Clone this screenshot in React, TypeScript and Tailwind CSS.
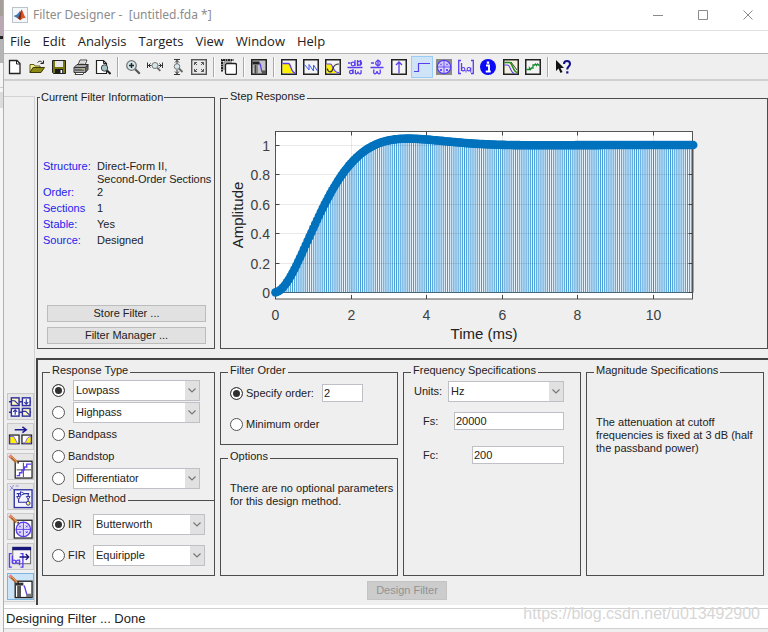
import type { ReactNode } from "react";

const INK = "#222222";
const VIOLET = "#5a3df0";

function Icon({ children, size = "h-4 w-4" }: { children: ReactNode; size?: string }) {
  return (
    <svg viewBox="0 0 16 16" className={`${size} shrink-0`} fill="none" aria-hidden="true">
      {children}
    </svg>
  );
}

function Boxed({ children, bg = "#f4f4f4" }: { children?: ReactNode; bg?: string }) {
  return (
    <Icon>
      <rect x="0.75" y="0.75" width="14.5" height="14.5" fill={bg} stroke={INK} strokeWidth="1.5" />
      {children}
    </Icon>
  );
}

const NewIcon = () => (
  <Icon>
    <path d="M2.5 1.5h7.500l3 3v10h-10.500z" fill="#fff" stroke={INK} strokeWidth="1.3" />
    <path d="M9.500 1.500v3.500h3.500" stroke={INK} />
  </Icon>
);

const OpenIcon = () => (
  <Icon>
    <path d="M1 13.5V5.5h4l1 1.5h5v2" fill="#f5ef8f" stroke="#5c5a10" />
    <path d="M1 13.5l3-5h11.5l-3.5 5z" fill="#8c8a12" stroke="#3c3a08" />
    <path d="M8.5 3.5c2-2 4-1.500 5 .5M14.500 1.500v3h-3" stroke={INK} />
  </Icon>
);

const SaveIcon = () => (
  <Icon>
    <path d="M1.500 1.500h13v13h-12l-1-1z" fill="#77750f" stroke={INK} />
    <rect x="4" y="2" width="8" height="6" fill="#e8e8e8" />
    <rect x="4" y="10" width="8" height="4.500" fill="#1a1a1a" />
    <rect x="9.500" y="11" width="1.700" height="3" fill="#fff" />
  </Icon>
);

const PrintIcon = () => (
  <Icon>
    <path d="M5 6l2-5h7l-2 5" fill="#fff" stroke="#444" />
    <path d="M7 3h5M6.500 4.500h5" stroke="#999" strokeWidth="0.700" />
    <path d="M1 8.500l3-3h11l-2.500 3v5H1z" fill="#a8a8a8" stroke="#333" />
    <path d="M12.500 8.500l2.500-3v5l-2.500 3" fill="#666" stroke="#333" />
    <path d="M1 8.500h11.500M2 11h9" stroke="#333" />
    <path d="M3 13.500h8l-1 2H2z" fill="#fff" stroke="#444" />
    <rect x="9" y="9.500" width="2" height="1" fill="#d7c634" />
  </Icon>
);

const PreviewIcon = () => (
  <Icon>
    <path d="M1.500 1.500h7l3 3v10h-10z" fill="#fff" stroke={INK} strokeWidth="1.200" />
    <path d="M8.500 1.500v3h3" stroke={INK} />
    <circle cx="9.500" cy="9" r="3.200" fill="#a9c4c9" stroke="#444" />
    <path d="M12 11.500l3.500 3.500" stroke={INK} strokeWidth="2" />
  </Icon>
);

const ZoomInIcon = () => (
  <Icon>
    <circle cx="6.500" cy="6.500" r="4.800" fill="#d3e6ec" stroke="#777" strokeWidth="1.300" />
    <path d="M4 6.500h5M6.500 4v5" stroke={INK} strokeWidth="1.400" />
    <path d="M10.200 10.200l4.500 4.500" stroke="#555" strokeWidth="2.200" />
  </Icon>
);

const ZoomXIcon = () => (
  <Icon>
    <circle cx="8" cy="6.500" r="3" fill="#d3e6ec" stroke="#777" />
    <path d="M10.300 8.800l3 3" stroke="#666" strokeWidth="1.800" />
    <path d="M.5 3.500v5.500M15.500 3.500v5.500M1 6.500h3.500M11.500 6.500h4M1.500 6.500l2-2M1.500 6.500l2 2M14.500 6.500l-2-2M14.500 6.500l-2 2" stroke="#333" />
  </Icon>
);

const ZoomYIcon = () => (
  <Icon>
    <circle cx="8" cy="7.500" r="2.800" fill="#d3e6ec" stroke="#777" />
    <path d="M10 9.500l3.500 3.500" stroke="#666" strokeWidth="1.800" />
    <path d="M5 .5h6M5 15.500h6M8 .5V4.500M8 11v4.500M8 1.500L6 3.500M8 1.500l2 2M8 14.500l-2-2M8 14.500l2-2" stroke="#333" />
  </Icon>
);

const FullViewIcon = () => (
  <Icon>
    <rect x="0.700" y="0.700" width="14.600" height="14.600" fill="#e9e9e9" stroke="#555" strokeWidth="1.400" />
    <path d="M3.500 6V3.500H6M10 3.500h2.500V6M12.500 10v2.500H10M6 12.500H3.500V10M3.500 3.500L6 6M12.500 3.500L10 6M12.500 12.500L10 10M3.500 12.500L6 10" stroke="#555" />
  </Icon>
);

const UndockIcon = () => (
  <Icon>
    <path d="M1 12.500V1h11.500" stroke={INK} strokeWidth="2" strokeDasharray="2 0.500" />
    <path d="M3 11V3h8" stroke="#666" />
    <rect x="4.500" y="4.500" width="11" height="11" rx="1.500" fill="#fff" stroke={INK} strokeWidth="1.300" />
  </Icon>
);

const SpecsIcon = () => (
  <Boxed bg="#c4c4c4">
    <rect x="1.500" y="2.500" width="7" height="3" fill={INK} />
    <path d="M4.500 6v8.500" stroke="#444" strokeWidth="2" />
    <path d="M1.500 8h2.500M6.500 6v8.500" stroke="#8a8a8a" />
    <path d="M8.500 4c2 2.500 1 7 3 9.500h3" stroke={VIOLET} strokeWidth="1.300" />
    <rect x="11" y="11.500" width="4" height="3.500" fill="#555" />
  </Boxed>
);

const MagnitudeIcon = () => (
  <Boxed>
    <path d="M1.500 4.500h6c2.500 0 2 8.500 6.500 9.500H1.500z" fill="#fff200" />
    <path d="M1.500 4.500h6c2.500 0 2 8.500 6.500 9.500" stroke={VIOLET} strokeWidth="1.300" />
  </Boxed>
);

const PhaseIcon = () => (
  <Boxed>
    <path d="M1.500 5.500L6 11V5.500L10.500 12V6l4 6" stroke="#3f5df0" />
  </Boxed>
);

const MagPhaseIcon = () => (
  <Boxed>
    <path d="M1.500 5h4c2.500 0 3 9 7 9H1.500z" fill="#fff200" />
    <path d="M1.500 5h4c2.500 0 2 9 8.500 8.500" stroke={VIOLET} strokeWidth="1.200" />
    <path d="M2 9.500c2 5 5 4 6 0 1-4 3-4.500 6-4.500" stroke="#333" strokeWidth="1.100" />
  </Boxed>
);

const GroupDelayIcon = () => (
  <Icon>
    <path d="M1 4h2.500M8 1v6M10.500 1v6M13.500 1v5.500M.500 8.500h15M6 10v5" stroke={VIOLET} strokeWidth="1.300" />
    <circle cx="6" cy="5" r="1.800" stroke={VIOLET} strokeWidth="1.200" />
    <circle cx="12.500" cy="4.200" r="2" stroke={VIOLET} strokeWidth="1.200" />
    <circle cx="4.200" cy="13" r="1.700" stroke={VIOLET} strokeWidth="1.200" />
    <path d="M8.500 11c-1 5 2 5 2.500 1.500.500 3.500 4 3.500 3-1.500" stroke={VIOLET} strokeWidth="1.200" />
  </Icon>
);

const PhaseDelayIcon = () => (
  <Icon>
    <path d="M2 4h3M9 .500v7M1.500 8.500h13" stroke={VIOLET} strokeWidth="1.300" />
    <circle cx="9" cy="4" r="2.300" stroke={VIOLET} strokeWidth="1.200" />
    <path d="M5 10.500c-1.500 5.500 2.500 5.500 3 1.500.500 4 4.500 4 3-1.500" stroke={VIOLET} strokeWidth="1.300" />
  </Icon>
);

const ImpulseIcon = () => (
  <Boxed>
    <path d="M8 14V3M5 6l3-3 3 3" stroke={VIOLET} strokeWidth="1.300" />
  </Boxed>
);

const StepIcon = () => (
  <Icon>
    <path d="M0 12.500h4.500V4.500H16" stroke={VIOLET} strokeWidth="1.200" />
  </Icon>
);

const PoleZeroIcon = () => (
  <Icon>
    <rect width="16" height="16" fill="#8a8a8a" />
    <circle cx="8" cy="8" r="6.700" fill="#dcd8ff" stroke={VIOLET} strokeWidth="1.200" />
    <path d="M8 1v14M1 8h14M4 4.500l2 2M6 4.500l-2 2M10 4.500l2 2M12 4.500l-2 2M4 10l2 2M6 10l-2 2M10 10l2 2M12 10l-2 2" stroke={VIOLET} strokeWidth="0.900" />
  </Icon>
);

const CoeffIcon = () => (
  <Icon>
    <path d="M3 1.500H.700v13H3M13 1.500h2.300v13H13M3.500 4v8" stroke={VIOLET} strokeWidth="1.300" />
    <circle cx="5.200" cy="10.200" r="1.700" stroke={VIOLET} strokeWidth="1.100" />
    <circle cx="10.800" cy="10.200" r="1.700" stroke={VIOLET} strokeWidth="1.100" />
    <path d="M8 11v2.500M12.800 8.500v5" stroke={VIOLET} />
  </Icon>
);

const InfoIcon = () => (
  <Icon>
    <circle cx="8" cy="8" r="8" fill="#0a0af5" />
    <path d="M6 6.500h3v6M5.700 12.500h5" stroke="#fff" strokeWidth="1.900" />
    <rect x="6.800" y="2.500" width="2.400" height="2.300" fill="#fff" />
  </Icon>
);

const MaskIcon = () => (
  <Boxed bg="#f3f0dc">
    <path d="M1.500 3.500h5c3 0 3.500 10 8 10" stroke="#1b8a1b" strokeWidth="1.500" />
    <path d="M1.500 6h3c3 0 3 8.500 7 8.500" stroke={VIOLET} strokeWidth="1.100" />
    <path d="M8 3l6 8" stroke="#444" />
  </Boxed>
);

const NoiseIcon = () => (
  <Boxed>
    <path d="M1.500 10.500h3V9l1 1.500L6.500 9H8V6h1.500l1-1 1 1.500 1-1.500 1 1h1" stroke="#138a2a" strokeWidth="1.300" />
  </Boxed>
);

const WhatsThisIcon = () => (
  <Icon>
    <path d="M1 1v11l2.500-2.500L5.500 14l2-1-2-4H9z" fill="#111" />
    <path d="M9 5c0-4 6-4 6 0 0 2.500-2.800 2.500-2.800 5.500" stroke="#10108c" strokeWidth="2" />
    <rect x="11.200" y="12.300" width="2.200" height="2.200" fill="#10108c" />
  </Icon>
);

type Tool = { name: string; icon: ReactNode; active?: boolean };

const toolGroups: Tool[][][] = [
  [[
    { name: "New", icon: <NewIcon /> },
    { name: "Open", icon: <OpenIcon /> },
    { name: "Save", icon: <SaveIcon /> },
    { name: "Print", icon: <PrintIcon /> },
    { name: "Print preview", icon: <PreviewIcon /> },
  ]],
  [[
    { name: "Zoom in", icon: <ZoomInIcon /> },
    { name: "Zoom X", icon: <ZoomXIcon /> },
    { name: "Zoom Y", icon: <ZoomYIcon /> },
    { name: "Full view", icon: <FullViewIcon /> },
  ]],
  [[{ name: "Undock", icon: <UndockIcon /> }]],
  [[{ name: "Filter specifications", icon: <SpecsIcon /> }]],
  [
    [
      { name: "Magnitude response", icon: <MagnitudeIcon /> },
      { name: "Phase response", icon: <PhaseIcon /> },
      { name: "Magnitude and phase", icon: <MagPhaseIcon /> },
      { name: "Group delay", icon: <GroupDelayIcon /> },
      { name: "Phase delay", icon: <PhaseDelayIcon /> },
      { name: "Impulse response", icon: <ImpulseIcon /> },
    ],
    [
      { name: "Step response", icon: <StepIcon />, active: true },
      { name: "Pole-zero plot", icon: <PoleZeroIcon /> },
      { name: "Coefficients", icon: <CoeffIcon /> },
      { name: "Information", icon: <InfoIcon /> },
    ],
    [
      { name: "Magnitude estimate", icon: <MaskIcon /> },
      { name: "Noise spectrum", icon: <NoiseIcon /> },
    ],
  ],
  [[{ name: "What's this?", icon: <WhatsThisIcon /> }]],
];

function Toolbar() {
  return (
    <div role="toolbar" className="flex h-[27px] items-center border-b-2 border-[#cfcfcf] bg-[#efefef]">
      {toolGroups.map((group, g) => (
        <div key={g} className="flex items-center">
          {g > 0 && <span className="mx-[3px] h-5 w-[2px] border-l border-[#a9a9a9] bg-white" />}
          <div className="flex gap-px">
            {group.map((part, p) => (
              <div key={p} className="flex">
                {part.map((tool) => (
                  <button
                    key={tool.name}
                    aria-label={tool.name}
                    className={`flex h-[22px] w-[22px] items-center justify-center border ${
                      tool.active ? "border-[#99cdf5] bg-[#cfe4f6]" : "border-transparent"
                    }`}
                  >
                    {tool.icon}
                  </button>
                ))}
              </div>
            ))}
          </div>
        </div>
      ))}
    </div>
  );
}

function Pencil() {
  return (
    <>
      <path d="M2.500 2.500l6.500 6" stroke="#b5652b" strokeWidth="3" />
      <path d="M1.500 1.500l2 2" stroke="#e8837a" strokeWidth="3.500" />
      <path d="M4 3l5.500 5" stroke="#f2b26b" strokeWidth="1" />
      <path d="M9 9.500l2.500.500-.500-2.500z" fill="#222" />
    </>
  );
}

function RailIcon({ children }: { children: ReactNode }) {
  return (
    <svg viewBox="0 0 26 26" className="h-[25px] w-[25px] shrink-0" fill="none" aria-hidden="true">
      {children}
    </svg>
  );
}

const railButtons: Tool[] = [
  {
    name: "Create a multirate filter",
    icon: (
      <RailIcon>
        <path d="M1 8h23M1 19h23" stroke="#3030a0" strokeWidth="1.500" />
        <g stroke="#3030a0" strokeWidth="1.500">
          <rect x="3.500" y="4" width="8" height="8" fill="#fffbc0" />
          <rect x="15" y="4" width="8" height="8" fill="#fff" />
          <rect x="3.500" y="15" width="8" height="8" fill="#fff" />
          <rect x="15" y="15" width="8" height="8" fill="#fffbc0" />
          <path d="M19 5.500v5M17 8.500l2 2 2-2M7.500 21.500v-5M5.500 18.500l2-2 2 2M4 7h3l4 4M15.500 18h3l4 4" strokeWidth="1.200" />
        </g>
      </RailIcon>
    ),
  },
  {
    name: "Transform filter",
    icon: (
      <RailIcon>
        <path d="M7 6h11M15 3l4 3-4 3" stroke="#1c1c90" strokeWidth="1.500" />
        <rect x="1.500" y="11.500" width="10" height="9" fill="#fff" stroke={INK} strokeWidth="1.300" />
        <rect x="14.500" y="11.500" width="10" height="9" fill="#fff" stroke={INK} strokeWidth="1.300" />
        <path d="M2 13h4l4 7.500H2zM15.500 20c5 0 2-6.500 8.500-7v7z" fill="#fff200" stroke={VIOLET} strokeWidth="0.800" />
      </RailIcon>
    ),
  },
  {
    name: "Set quantization parameters",
    icon: (
      <RailIcon>
        <rect x="7.500" y="7.500" width="17.500" height="17.500" fill="#fff" stroke={INK} strokeWidth="1.300" />
        <path d="M16 9v15M9 16.500h15" stroke="#444" />
        <path d="M9 22.500h3v-3h2.500v-3H17v-3h2.500v-3H24" stroke={VIOLET} strokeWidth="1.400" />
        <Pencil />
      </RailIcon>
    ),
  },
  {
    name: "Realize model",
    icon: (
      <RailIcon>
        <path d="M2 2l4 4M6 1L2 7M8 2h3" stroke="#8d8de0" />
        <rect x="6.500" y="6" width="18.500" height="18.500" fill="#f3f2ff" stroke="#3030a0" strokeWidth="1.400" />
        <path d="M9 10h13M11 10v9h10M21 10v10" stroke="#3030a0" strokeWidth="1.200" />
        <path d="M13 8v4l4-2zM9 13h4l-2 3zM19 13h4l-2 3z" fill="#fff" stroke="#3030a0" />
        <circle cx="21" cy="20" r="2" fill="#fff26b" stroke="#3030a0" />
      </RailIcon>
    ),
  },
  {
    name: "Pole-zero editor",
    icon: (
      <RailIcon>
        <rect x="6.500" y="6.500" width="18.500" height="18.500" fill="#fff" stroke={INK} strokeWidth="1.300" />
        <circle cx="16" cy="16" r="7.500" fill="#e6e2ff" stroke={VIOLET} strokeWidth="1.400" />
        <path d="M16 8v16M8 16h16M11.500 12l2 2M13.500 12l-2 2M18.500 12l2 2M20.500 12l-2 2M11.500 18l2 2M13.500 18l-2 2M18.500 18l2 2M20.500 18l-2 2" stroke={VIOLET} />
        <Pencil />
      </RailIcon>
    ),
  },
  {
    name: "Import filter",
    icon: (
      <RailIcon>
        <rect x="5" y="3.500" width="18.500" height="17" fill="#f6f6f6" stroke="#666" />
        <rect x="4.500" y="3" width="19.500" height="3.500" fill="#15157c" />
        <path d="M4 10H1.500v14H4M13 10h2.500v14H13M4.500 12v8M12 16v6" stroke={VIOLET} strokeWidth="1.400" />
        <circle cx="6.300" cy="18.500" r="1.800" stroke={VIOLET} strokeWidth="1.200" />
        <circle cx="10.500" cy="18.500" r="1.700" stroke={VIOLET} strokeWidth="1.200" />
        <path d="M12 13.500h9M18.500 10.500l3 3-3 3" stroke="#15157c" strokeWidth="1.400" />
      </RailIcon>
    ),
  },
  {
    name: "Design filter",
    active: true,
    icon: (
      <RailIcon>
        <rect x="7.500" y="7.500" width="17.500" height="17" fill="#fff" stroke={INK} strokeWidth="1.400" />
        <rect x="8" y="9" width="8" height="3" fill="#333" />
        <path d="M11.500 12v12" stroke="#555" strokeWidth="4" />
        <path d="M16.500 12c2 2 2 9 4 11" stroke={VIOLET} strokeWidth="1.400" />
        <rect x="19" y="20.500" width="5.500" height="3.500" fill="#777" />
        <Pencil />
      </RailIcon>
    ),
  },
];

function Panel({
  title,
  className = "",
  centered = false,
  children,
}: {
  title: string;
  className?: string;
  centered?: boolean;
  children: ReactNode;
}) {
  return (
    <fieldset className={`min-w-0 border border-[#4d4d4d] ${className}`}>
      <legend className={centered ? "ml-[2px] px-px leading-[14px]" : "ml-[7px] px-[2px] pb-1 leading-[12px]"}>
        {title}
      </legend>
      {children}
    </fieldset>
  );
}

function Dropdown({ label, options, className = "" }: { label: string; options: string[]; className?: string }) {
  return (
    <div className={`relative h-[21px] ${className}`}>
      <select
        aria-label={label}
        className="h-full w-full appearance-none rounded-none border border-[#bfbfc6] bg-white pl-[2px] text-[#222]"
      >
        {options.map((o) => (
          <option key={o}>{o}</option>
        ))}
      </select>
      <span className="pointer-events-none absolute inset-y-px right-px flex w-[14px] items-center justify-center bg-[#e1e1e1]">
        <svg viewBox="0 0 8 5" className="h-[5px] w-2" fill="none" aria-hidden="true">
          <path d="M0.500 0.500L4 4l3.500-3.500" stroke="#777" strokeWidth="1.200" />
        </svg>
      </span>
    </div>
  );
}

function Radio({
  name,
  label,
  hideLabel = false,
  checked = false,
  className = "",
}: {
  name: string;
  label: string;
  hideLabel?: boolean;
  checked?: boolean;
  className?: string;
}) {
  return (
    <label className={`flex items-center gap-[3px] ${className}`}>
      <input
        type="radio"
        name={name}
        defaultChecked={checked}
        aria-label={label}
        className="h-[13px] w-[13px] shrink-0 appearance-none rounded-full border border-[#555] bg-white checked:border-[#444] checked:bg-[#303030] checked:shadow-[inset_0_0_0_2px_#fff]"
      />
      {!hideLabel && label}
    </label>
  );
}

function NumberBox({ id, value, label, className = "" }: { id: string; value: string; label?: string; className?: string }) {
  return (
    <input
      id={id}
      type="text"
      aria-label={label}
      defaultValue={value}
      className={`h-[18px] border border-[#bfbfc6] bg-white px-px text-[#222] ${className}`}
    />
  );
}

const PLOT = { left: 54.5, right: 471.5, top: 25.5, bottom: 193, zero: 186.5, unit: 147.5, perMs: 37.8 };

// Step response of a second-order Butterworth lowpass, fc = 200 Hz, fs = 20 kHz.
function stepResponse(count: number) {
  const k = Math.tan((Math.PI * 200) / 20000);
  const norm = 1 / (1 + Math.SQRT2 * k + k * k);
  const b0 = k * k * norm;
  const a1 = 2 * (k * k - 1) * norm;
  const a2 = (1 - Math.SQRT2 * k + k * k) * norm;
  const y: number[] = [];
  for (let n = 0; n < count; n++) {
    const gain = n === 0 ? 1 : n === 1 ? 3 : 4;
    y.push(b0 * gain - a1 * (y[n - 1] ?? 0) - a2 * (y[n - 2] ?? 0));
  }
  return y;
}

function StepChart() {
  const samples = stepResponse(222).map((v, n) => ({
    x: PLOT.left + n * 0.05 * PLOT.perMs,
    y: PLOT.zero - v * PLOT.unit,
  }));
  const yTicks = [0, 0.2, 0.4, 0.6, 0.8, 1];
  const xTicks = [0, 2, 4, 6, 8, 10];
  const yAt = (v: number) => Math.floor(PLOT.zero - v * PLOT.unit) + 0.5;
  const xAt = (t: number) => Math.floor(PLOT.left + t * PLOT.perMs) + 0.5;
  return (
    <svg viewBox="0 0 546 242" className="block h-auto w-full" role="img" aria-label="Step response, amplitude over time">
      <rect x={PLOT.left} y={PLOT.top} width={PLOT.right - PLOT.left} height={PLOT.bottom - PLOT.top} fill="#fff" />
      <g stroke="#0078cc" strokeOpacity="0.750">
        {samples.map((s, i) => (
          <line key={i} x1={s.x} x2={s.x} y1={PLOT.zero} y2={s.y} />
        ))}
      </g>
      <g stroke="#262626" strokeOpacity="0.100">
        {yTicks.map((v) => (
          <line key={v} x1={PLOT.left} x2={PLOT.right} y1={yAt(v)} y2={yAt(v)} />
        ))}
        {xTicks.map((t) => (
          <line key={t} x1={xAt(t)} x2={xAt(t)} y1={PLOT.top} y2={PLOT.bottom} />
        ))}
      </g>
      <line x1={PLOT.left} x2={PLOT.right} y1={PLOT.zero} y2={PLOT.zero} stroke="#4a6478" />
      <rect
        x={PLOT.left}
        y={PLOT.top}
        width={PLOT.right - PLOT.left}
        height={PLOT.bottom - PLOT.top}
        stroke="#555"
        fill="none"
      />
      <g stroke="#444">
        {yTicks.map((v) => (
          <path key={v} d={`M${PLOT.left} ${yAt(v)}h4M${PLOT.right} ${yAt(v)}h-4`} />
        ))}
        {xTicks.map((t) => (
          <path key={t} d={`M${xAt(t)} ${PLOT.bottom}v-4M${xAt(t)} ${PLOT.top}v4`} />
        ))}
      </g>
      <g fill="#0072bd">
        {samples.map((s, i) => (
          <circle key={i} cx={s.x} cy={s.y} r="4.300" />
        ))}
      </g>
      <g fill="#404040" fontSize="14">
        {yTicks.map((v) => (
          <text key={v} x="49" y={yAt(v) + 5} textAnchor="end">{v}</text>
        ))}
        {xTicks.map((t) => (
          <text key={t} x={xAt(t)} y="214" textAnchor="middle">{t}</text>
        ))}
      </g>
      <g fill="#222" fontSize="15" textAnchor="middle">
        <text x="263" y="233">Time (ms)</text>
        <text transform="translate(22 109) rotate(-90)">Amplitude</text>
      </g>
    </svg>
  );
}

const filterInfo: [string, ReactNode][] = [
  ["Structure:", <>Direct-Form II,<br />Second-Order Sections</>],
  ["Order:", "2"],
  ["Sections", "1"],
  ["Stable:", "Yes"],
  ["Source:", "Designed"],
];

function FilterInfo() {
  return (
    <Panel title="Current Filter Information" centered className="w-[178px] shrink-0">
      <div className="flex h-full flex-col pt-14 pb-1">
        <dl className="pl-[5px]">
          {filterInfo.map(([term, value]) => (
            <div key={term} className="flex min-h-4 items-start leading-[13px]">
              <dt className="w-[54px] shrink-0 text-[#2222ee]">{term}</dt>
              <dd className="whitespace-nowrap">{value}</dd>
            </div>
          ))}
        </dl>
        <div className="mt-auto flex flex-col gap-[5px] pr-2 pl-[9px]">
          {["Store Filter ...", "Filter Manager ..."].map((t) => (
            <button key={t} className="h-[17px] border border-[#bcbcbc] bg-[#e1e1e1] leading-[15px]">
              {t}
            </button>
          ))}
        </div>
      </div>
    </Panel>
  );
}

function ResponseType() {
  return (
    <div className="flex min-w-0 flex-col">
      <Panel title="Response Type" className="border-b-0">
        <div className="pr-[14px] pb-[10px] pl-[9px]">
          <div className="flex h-[22px] items-start">
            <Radio name="response" label="Lowpass" hideLabel checked className="h-5" />
            <Dropdown label="Lowpass type" options={["Lowpass", "Raised-cosine"]} className="ml-2 flex-1" />
          </div>
          <div className="flex h-[22px] items-start">
            <Radio name="response" label="Highpass" hideLabel className="h-5" />
            <Dropdown label="Highpass type" options={["Highpass", "Nyquist"]} className="ml-2 flex-1" />
          </div>
          <Radio name="response" label="Bandpass" className="h-5" />
          <Radio name="response" label="Bandstop" className="h-6" />
          <div className="flex h-[22px] items-start">
            <Radio name="response" label="Other response" hideLabel className="h-5" />
            <Dropdown label="Other type" options={["Differentiator", "Multiband"]} className="ml-2 flex-1" />
          </div>
        </div>
      </Panel>
      <Panel title="Design Method" className="-mt-2 flex-1">
        <div className="flex flex-col gap-[10px] pt-[6px] pr-[9px] pb-[9px] pl-[9px]">
          <div className="flex items-center">
            <Radio name="method" label="IIR" checked className="w-[41px]" />
            <Dropdown label="IIR method" options={["Butterworth", "Elliptic"]} className="flex-1" />
          </div>
          <div className="flex items-center">
            <Radio name="method" label="FIR" className="w-[41px]" />
            <Dropdown label="FIR method" options={["Equiripple", "Window"]} className="flex-1" />
          </div>
        </div>
      </Panel>
    </div>
  );
}

function OrderAndOptions() {
  return (
    <div className="flex min-w-0 flex-col gap-[5px]">
      <Panel title="Filter Order">
        <div className="flex flex-col gap-[9px] pt-[2px] pb-[9px] pl-[9px]">
          <div className="flex h-[22px] items-center">
            <Radio name="order" label="Specify order:" checked className="w-[92px]" />
            <NumberBox id="order" label="Order" value="2" className="w-[41px]" />
          </div>
          <Radio name="order" label="Minimum order" className="h-[22px]" />
        </div>
      </Panel>
      <Panel title="Options" className="flex-1">
        <p className="pt-4 pl-[9px] leading-[13px]">
          There are no optional parameters
          <br />
          for this design method.
        </p>
      </Panel>
    </div>
  );
}

function FrequencySpecs() {
  return (
    <Panel title="Frequency Specifications">
      <div className="pt-px pr-4 pl-[10px]">
        <div className="flex items-center justify-between">
          <span>Units:</span>
          <Dropdown label="Units" options={["Hz", "kHz", "MHz"]} className="w-[116px]" />
        </div>
        <div className="mt-[10px] flex items-center justify-between">
          <label htmlFor="fs" className="pl-[9px]">Fs:</label>
          <NumberBox id="fs" value="20000" className="w-[110px]" />
        </div>
        <div className="mt-4 flex items-center justify-between">
          <label htmlFor="fc" className="pl-[9px]">Fc:</label>
          <NumberBox id="fc" value="200" className="w-[92px]" />
        </div>
      </div>
    </Panel>
  );
}

function TitleBar() {
  return (
    <header className="flex h-[31px] items-center border-b border-[#e2e2e2] bg-white">
      <svg viewBox="0 0 16 16" className="ml-2 h-4 w-4" aria-hidden="true">
        <rect x="0.500" y="0.500" width="15" height="15" fill="#f4f7fa" stroke="#b9c3cc" />
        <path d="M1.500 9l3.500-1.500 3-3.500 1 2-3 5.500z" fill="#3f79b5" />
        <path d="M6 11.500L9.500 2.500c1.500 1.500 2.500 6 4.500 9-2-1-3.500-.500-5.500 2-.500-1-1-1.500-2.500-2z" fill="#d9541e" />
        <path d="M6 11.500L9.500 2.500l-.500 8-1 2.500z" fill="#7c2413" />
      </svg>
      <h1 className="ml-[5px] font-['Noto_Sans','Open_Sans',sans-serif] text-[12px] whitespace-pre text-[#8c8c8c]">
        {"Filter Designer -  [untitled.fda *]"}
      </h1>
      <div className="ml-auto flex gap-[5px] text-[#8a8a8a]">
        {[
          ["Minimize", "M0 5.5h10"],
          ["Maximize", "M0.5 0.5h9v9h-9z"],
          ["Close", "M0.5 0.5l9 9M9.500 0.500l-9 9"],
        ].map(([name, d]) => (
          <button key={name} aria-label={name} className="flex h-7 w-10 items-center justify-center">
            <svg viewBox="0 0 10 10" className="h-[10px] w-[10px]" fill="none" stroke="currentColor" aria-hidden="true">
              <path d={d} />
            </svg>
          </button>
        ))}
      </div>
    </header>
  );
}

export default function App() {
  return (
    <div className="flex min-h-screen bg-[#efefef] font-['Liberation_Sans',Arial,sans-serif] text-[11px] text-[#222]">
      <div className="flex w-1 shrink-0 flex-col border-r border-[#b0b0b0] bg-[#f5f5f5]" aria-hidden="true">
        <span className="h-4 bg-[#a39f98]" />
        <span className="h-5 bg-[#b9a9b3]" />
        <span className="h-[3px] bg-[#222]" />
        <span className="h-6 bg-[#b5b5b5]" />
        <span className="h-[25px] border-b border-[#ccc]" />
        <span className="mt-1 h-4 bg-[#dcdcdc]" />
      </div>
      <div className="relative flex min-w-0 flex-1 flex-col">
        <TitleBar />
        <nav className="flex h-[23px] items-center border-b border-[#b4b4b4] bg-white font-['Open_Sans','Noto_Sans',sans-serif] text-[13px] text-[#222]">
          {["File", "Edit", "Analysis", "Targets", "View", "Window", "Help"].map((m) => (
            <button key={m} className="px-[6px]">
              {m}
            </button>
          ))}
        </nav>
        <Toolbar />
        <main className="flex flex-1">
          <aside className="flex w-8 shrink-0 flex-col pt-[15px]">
            <div className="mr-px flex flex-1 flex-col items-end justify-end gap-[3px] border border-l-0 border-[#d2d2d2] pb-px">
              {railButtons.map((b) => (
                <button
                  key={b.name}
                  aria-label={b.name}
                  className={`flex h-[27px] w-[27px] items-center justify-center border ${
                    b.active ? "border-[#7ab4e0] bg-[#cce4f7]" : "border-[#c9c9c9] bg-[#e6e6e6]"
                  }`}
                >
                  {b.icon}
                </button>
              ))}
            </div>
            <div className="h-[3px]" />
          </aside>
          <div className="flex min-w-0 flex-1 flex-col gap-[9px] pt-[9px]">
            <div className="flex gap-[5px] pl-px">
              <FilterInfo />
              <Panel title="Step Response" className="flex-1">
                <StepChart />
              </Panel>
            </div>
            <div className="flex flex-1 flex-col border-t-2 border-l-2 border-[#444] pt-1 pr-1 pb-1 pl-1">
              <div className="grid grid-cols-[173fr_178fr_178fr_178fr] gap-[5px]">
                <ResponseType />
                <OrderAndOptions />
                <FrequencySpecs />
                <Panel title="Magnitude Specifications">
                  <p className="pt-9 pl-[9px] leading-[13px]">
                    The attenuation at cutoff
                    <br />
                    frequencies is fixed at 3 dB (half
                    <br />
                    the passband power)
                  </p>
                </Panel>
              </div>
              <div className="flex justify-center pt-[5px] pl-2">
                <button disabled className="h-[19px] w-20 border border-[#c4c4c4] bg-[#cccccc] text-[#929292]">
                  Design Filter
                </button>
              </div>
            </div>
          </div>
        </main>
        <footer>
          <div className="h-[3px] bg-white" />
          <p className="border-y border-[#d0d0d0] bg-white pl-[2px] text-[13px] leading-[19px]">Designing Filter ... Done</p>
          <div className="h-[3px]" />
        </footer>
        <span className="absolute right-2 bottom-2 text-[16px] leading-5 text-[#d6d6d6]">
          https://blog.csdn.net/u013492900
        </span>
      </div>
    </div>
  );
}
